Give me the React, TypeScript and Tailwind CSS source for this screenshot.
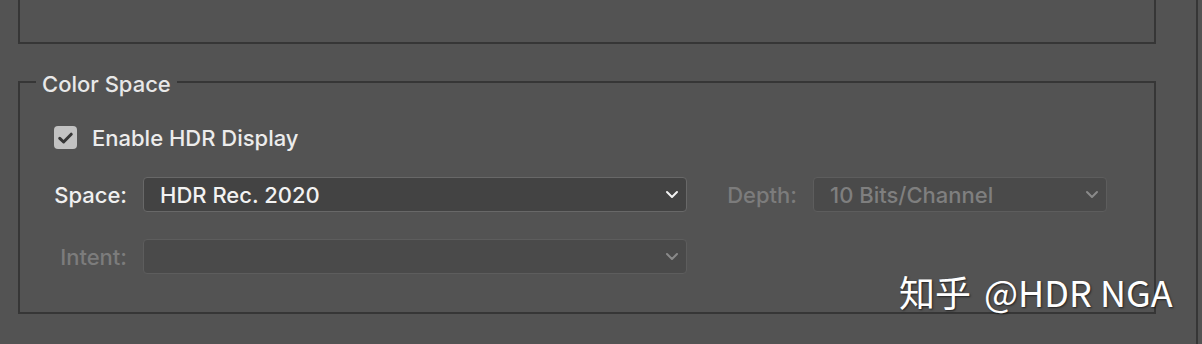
import type { ReactNode } from 'react';

const font = { fontFamily: 'Inter, "Noto Sans", sans-serif' };

function Chevron({ dim = false }: { dim?: boolean }) {
  return (
    <svg width="14" height="9" viewBox="0 0 14 9" fill="none" className="shrink-0">
      <path
        d="M2 2l5 5 5-5"
        stroke={dim ? '#8a8a8a' : '#f2f2f2'}
        strokeWidth="2"
        strokeLinecap="round"
        strokeLinejoin="round"
      />
    </svg>
  );
}

function Select({ value, width, disabled = false }: { value?: string; width: string; disabled?: boolean }) {
  return (
    <div
      className={`flex h-[35px] items-center justify-between rounded-[4px] border pl-[16px] pr-[7px] ${width} ${
        disabled ? 'border-[#5d5d5d] bg-[#4a4a4a] text-[#7f7f7f]' : 'border-[#686868] bg-[#434343] text-[#f2f2f2]'
      }`}
    >
      <span className="text-[22px] font-medium leading-none">{value}</span>
      <Chevron dim={disabled} />
    </div>
  );
}

function Label({ children, disabled = false, className = '' }: { children: ReactNode; disabled?: boolean; className?: string }) {
  return (
    <span
      className={`text-right text-[22px] font-medium leading-none ${disabled ? 'text-[#7c7c7c]' : 'text-[#f0f0f0]'} ${className}`}
    >
      {children}
    </span>
  );
}

export default function App() {
  return (
    <div className="relative flex h-[344px] w-[1202px] overflow-hidden bg-[#535353]" style={font}>
      <div className="w-[1196px] pl-[18px]">
        {/* previous group, cut off at the top */}
        <div className="h-[44px] w-[1138px] border-x-2 border-b-2 border-[#363636]" />

        <fieldset className="mt-[26px] w-[1138px] border-2 border-[#363636] pb-[38px]">
          <legend className="ml-[16px] px-[6px] text-[22px] font-medium leading-[24px] text-[#e8e8e8]">
            <span className="relative top-[2px]">Color Space</span>
          </legend>

          <div className="ml-[34px] mt-[32px] flex items-center gap-[15px]">
            <div className="flex h-[23px] w-[23px] items-center justify-center rounded-[4px] bg-[#c2c2c2]">
              <svg width="15" height="12" viewBox="0 0 15 12" fill="none">
                <path d="M1.8 6.4l3.8 3.6L13.2 2.2" stroke="#363636" strokeWidth="3" strokeLinecap="round" strokeLinejoin="round" />
              </svg>
            </div>
            <span className="text-[22px] font-medium leading-none text-[#ececec]">Enable HDR Display</span>
          </div>

          <div className="mt-[28px] flex items-center">
            <Label className="w-[107px]">Space:</Label>
            <div className="ml-[16px]">
              <Select value="HDR Rec. 2020" width="w-[544px]" />
            </div>
            <Label disabled className="w-[110px]">Depth:</Label>
            <div className="ml-[16px]">
              <Select value="10 Bits/Channel" width="w-[294px]" disabled />
            </div>
          </div>

          <div className="mt-[27px] flex items-center">
            <Label disabled className="w-[107px]">Intent:</Label>
            <div className="ml-[16px]">
              <Select width="w-[544px]" disabled />
            </div>
          </div>
        </fieldset>
      </div>
      <div className="h-full w-[2px] bg-[#363636]" />

      {/* watermark */}
      <div
        className="absolute left-[899px] top-[269px] flex gap-[13px] text-[36px] leading-[44px] text-white"
        style={{ fontFamily: '"Noto Sans CJK SC", "Noto Sans", sans-serif', textShadow: '1px 1px 2px rgba(0,0,0,0.6)' }}
      >
        <span>知乎</span>
        <span>@HDR NGA</span>
      </div>
    </div>
  );
}
